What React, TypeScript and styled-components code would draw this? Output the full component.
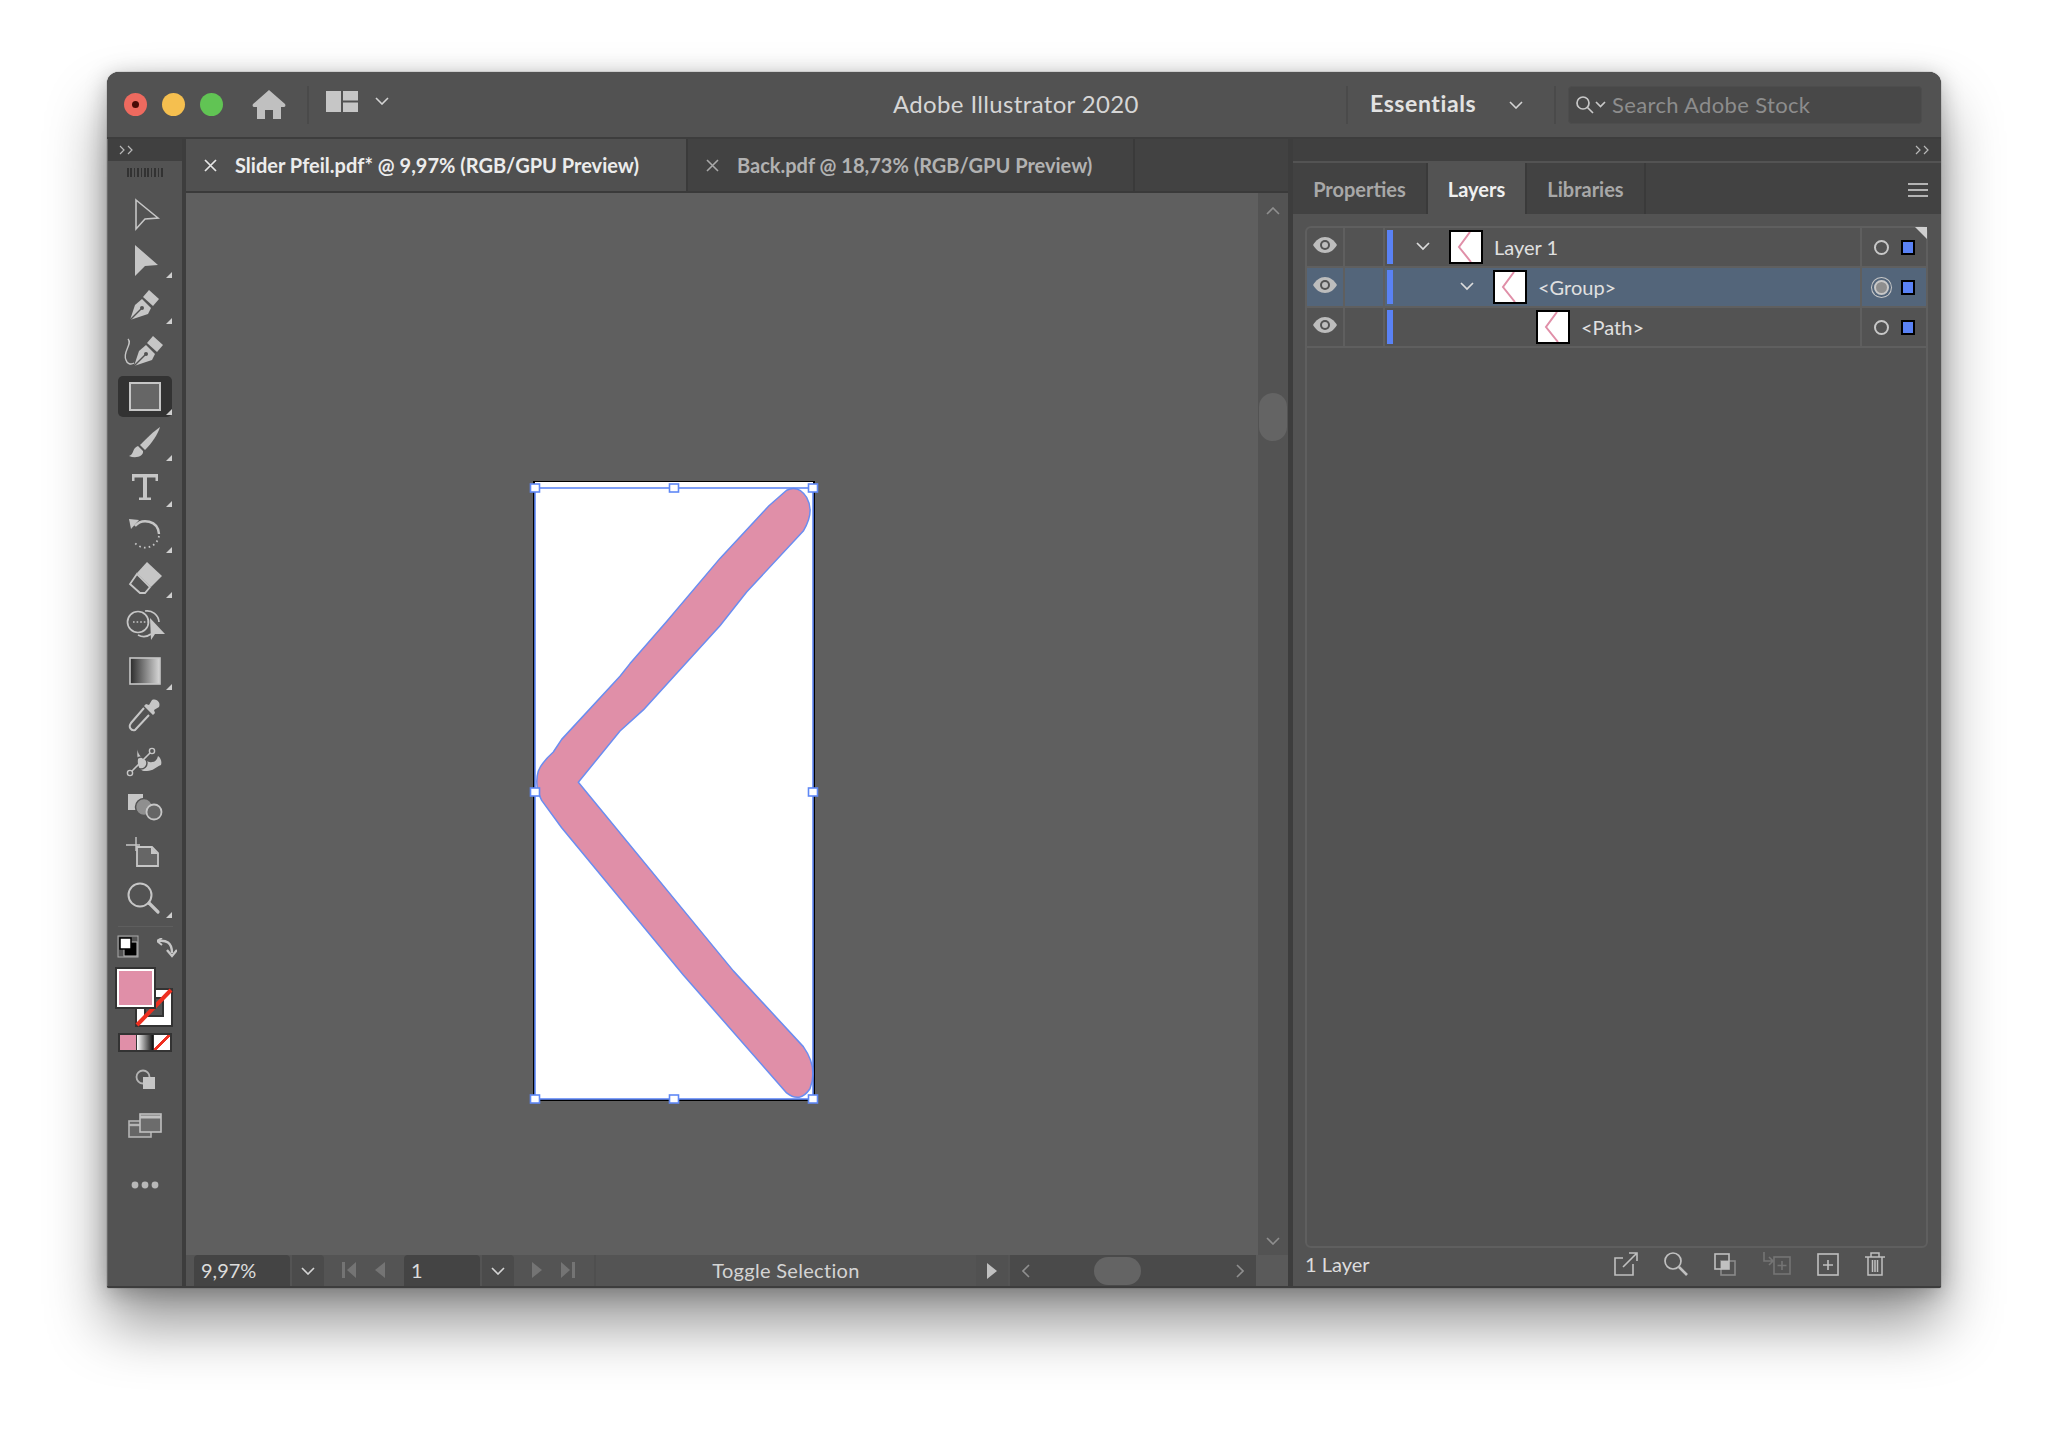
import React from "react";
import styled, { createGlobalStyle } from "styled-components";

const GlobalStyle = createGlobalStyle`
  html, body { margin: 0; padding: 0; background: #fff; }
  body { width: 2048px; height: 1429px; overflow: hidden; font-family: "Lato", "Noto Sans", sans-serif; }
  * { box-sizing: border-box; }
`;

const ICON = "#c6c6c6";
const PINK = "#e08fa8";
const BLUE = "#5a82f5";

const Win = styled.div`
  width: 1834px;
  height: 1216px;
  margin: 72px 0 0 107px;
  border-radius: 12px 12px 2px 2px;
  background: #3d3d3d;
  overflow: hidden;
  display: flex;
  flex-direction: column;
  box-shadow: 0 36px 60px rgba(0, 0, 0, 0.42), 0 4px 22px rgba(0, 0, 0, 0.25), 0 0 1px #333;
`;
const TitleBar = styled.div`
  height: 65px;
  flex: none;
  background: #525252;
  display: flex;
  align-items: center;
  padding-left: 17px;
  position: relative;
  margin-bottom: 2px;
`;
const Light = styled.span<{ $c: string }>`
  width: 23px;
  height: 23px;
  border-radius: 50%;
  background: ${(p) => p.$c};
  margin-right: 15px;
  flex: none;
  display: flex;
  align-items: center;
  justify-content: center;
`;
const LightDot = styled.span`
  width: 7px;
  height: 7px;
  border-radius: 50%;
  background: #4a0b06;
`;
const Sep = styled.span<{ $ml: number }>`
  width: 2px;
  height: 38px;
  background: #4a4a4a;
  margin-left: ${(p) => p.$ml}px;
  flex: none;
`;
const AppTitle = styled.div`
  position: absolute;
  left: 786px;
  top: 17px;
  font-size: 24px;
  line-height: 30px;
  color: #d6d6d6;
  letter-spacing: 0.35px;
`;
const Workspace = styled.div`
  margin-left: 22px;
  font-size: 23px;
  font-weight: 700;
  color: #e2e2e2;
  letter-spacing: 0.6px;
  width: 119px;
  position: relative;
  top: -2px;
`;
const SearchBox = styled.div`
  width: 354px;
  height: 38px;
  margin-left: 12px;
  background: #484848;
  border: 1px solid #4d4d4d;
  border-radius: 4px;
  display: flex;
  align-items: center;
  padding-left: 6px;
  color: #8d8d8d;
  font-size: 22px;
  letter-spacing: 0.35px;
`;
const Body = styled.div`
  flex: 1;
  display: flex;
  min-height: 0;
  padding-bottom: 2px;
`;
const Toolbar = styled.div`
  width: 75px;
  flex: none;
  margin-right: 4px;
  background: #535353;
  display: flex;
  flex-direction: column;
  align-items: center;
  border-left: 1px solid #6a6a6a;
`;
const CollapseStrip = styled.div<{ $right?: boolean }>`
  height: 22px;
  width: 100%;
  flex: none;
  background: #404040;
  display: flex;
  align-items: center;
  justify-content: ${(p) => (p.$right ? "flex-end" : "flex-start")};
  padding: 0 11px;
  margin-bottom: 2px;
`;
const Grip = styled.div`
  width: 36px;
  height: 9px;
  margin: 5px 0 14px;
  flex: none;
  background: repeating-linear-gradient(90deg, #323232 0 1.6px, transparent 1.6px 3.4px);
`;
const Tool = styled.div<{ $active?: boolean }>`
  width: 54px;
  height: 45.7px;
  flex: none;
  position: relative;
  display: flex;
  align-items: center;
  justify-content: center;
  border-radius: 5px;
  &::before {
    content: "";
    position: absolute;
    inset: 2px 0;
    border-radius: 5px;
    background: ${(p) => (p.$active ? "#333" : "transparent")};
  }
  svg { position: relative; }
`;
const MenuMark = styled.span`
  position: absolute;
  right: 0;
  bottom: 4px;
  width: 0;
  height: 0;
  border-style: solid;
  border-width: 0 0 6px 6px;
  border-color: transparent transparent #cfcfcf transparent;
`;
const ToolRule = styled.div`
  width: 55px;
  height: 1px;
  background: #5e5e5e;
  margin-top: 4px;
  flex: none;
`;
const ColorStack = styled.div`
  position: relative;
  width: 56px;
  height: 97px;
  margin-top: 8px;
  flex: none;
`;
const FillSwatch = styled.div`
  position: absolute;
  left: 0;
  top: 34px;
  width: 37px;
  height: 38px;
  background: ${PINK};
  border: 2px solid #fff;
  outline: 2px solid #333;
  outline-offset: 0;
`;
const StrokeSwatch = styled.svg`
  position: absolute;
  left: 18px;
  top: 53px;
`;
const SmallSvg = styled.svg<{ $l: number; $t: number }>`
  position: absolute;
  left: ${(p) => p.$l}px;
  top: ${(p) => p.$t}px;
`;
const ModeRow = styled.div`
  display: flex;
  width: 54px;
  height: 19px;
  flex: none;
  margin-top: 1px;
  border: 2px solid #333;
  background: #333;
  gap: 1px;
`;
const ModeCell = styled.div<{ $bg: string }>`
  flex: 1;
  background: ${(p) => p.$bg};
`;
const ToolFoot = styled.div<{ $mt: number }>`
  margin-top: ${(p) => p.$mt}px;
  flex: none;
  line-height: 0;
`;
const Doc = styled.div`
  width: 1102px;
  flex: none;
  margin-right: 5px;
  display: flex;
  flex-direction: column;
`;
const Tabs = styled.div`
  height: 54px;
  flex: none;
  display: flex;
  background: #424242;
  border-bottom: 2px solid #3a3a3a;
`;
const DocTab = styled.div<{ $active?: boolean; $w: number }>`
  width: ${(p) => p.$w}px;
  display: flex;
  align-items: center;
  padding-left: 18px;
  background: ${(p) => (p.$active ? "#505050" : "#424242")};
  border-right: 2px solid #3a3a3a;
  color: ${(p) => (p.$active ? "#ececec" : "#b2b2b2")};
  font-size: 20px;
  font-weight: 700;
  white-space: nowrap;
`;
const TabClose = styled.svg`
  margin-right: 18px;
  flex: none;
`;
const Middle = styled.div`
  flex: 1;
  display: flex;
  min-height: 0;
`;
const Canvas = styled.div`
  flex: 1;
  background: #5f5f5f;
  padding: 288px 0 0 347px;
`;
const Artboard = styled.div`
  position: relative;
  width: 282px;
  height: 620px;
  background: #fff;
  border: 2px solid #000;
  border-top-width: 1px;
`;
const ArtOverlay = styled.svg`
  position: absolute;
  left: -15px;
  top: -12px;
`;
const VScroll = styled.div`
  width: 30px;
  flex: none;
  background: #535353;
  display: flex;
  flex-direction: column;
  align-items: center;
  padding: 14px 0 10px;
  justify-content: space-between;
`;
const VThumb = styled.div`
  width: 28px;
  height: 48px;
  border-radius: 14px;
  background: #646464;
  margin-bottom: 9px;
`;
const StatusBar = styled.div`
  height: 31px;
  flex: none;
  display: flex;
  background: #545454;
  padding-left: 8px;
  color: #dcdcdc;
  font-size: 20px;
`;
const Field = styled.div<{ $w: number }>`
  width: ${(p) => p.$w}px;
  background: #444;
  border-radius: 4px 4px 0 0;
  padding: 3px 0 0 7px;
  flex: none;
`;
const DropBtn = styled.div`
  width: 32px;
  margin-left: 2px;
  background: #4b4b4b;
  border-radius: 0 4px 0 0;
  display: flex;
  align-items: center;
  justify-content: center;
  flex: none;
`;
const NavGroup = styled.div<{ $w: number }>`
  width: ${(p) => p.$w}px;
  flex: none;
  display: flex;
  align-items: center;
  padding: 0 0 2px 18px;
  gap: 19px;
`;
const ToggleLabel = styled.div`
  width: 382px;
  flex: none;
  border-left: 2px solid #4f4f4f;
  text-align: center;
  padding: 3px 0 0 0;
  letter-spacing: 0.3px;
  color: #d4d4d4;
`;
const PlayCell = styled.div`
  width: 32px;
  flex: none;
  background: #515151;
  display: flex;
  align-items: center;
  justify-content: center;
`;
const HScroll = styled.div`
  width: 246px;
  flex: none;
  margin-left: 2px;
  background: #4a4a4a;
  display: flex;
  align-items: center;
  justify-content: space-between;
  padding: 0 12px;
`;
const HThumb = styled.div`
  width: 47px;
  height: 28px;
  border-radius: 14px;
  background: #646464;
`;
const Corner = styled.div`
  flex: 1;
  background: #5a5a5a;
`;
const Panel = styled.div`
  flex: 1;
  min-width: 0;
  background: #535353;
  display: flex;
  flex-direction: column;
  padding-bottom: 2px;
`;
const PanelTabs = styled.div`
  height: 51px;
  flex: none;
  display: flex;
  align-items: stretch;
  background: #424242;
  position: relative;
`;
const PanelTab = styled.div<{ $active?: boolean; $w: number }>`
  width: ${(p) => p.$w}px;
  display: flex;
  align-items: center;
  justify-content: center;
  font-size: 20px;
  font-weight: 700;
  color: ${(p) => (p.$active ? "#f0f0f0" : "#a8a8a8")};
  background: ${(p) => (p.$active ? "#535353" : "#424242")};
  border-right: 2px solid #3a3a3a;
`;
const PanelMenu = styled.svg`
  position: absolute;
  right: 13px;
  top: 20px;
`;
const List = styled.div`
  flex: 1;
  margin: 12px 13px 0 12px;
  border: 2px solid #5f5f5f;
  border-radius: 6px;
  position: relative;
  min-height: 0;
`;
const Corner2 = styled.span`
  position: absolute;
  right: -1px;
  top: -1px;
  width: 0;
  height: 0;
  border-style: solid;
  border-width: 0 12px 12px 0;
  border-color: transparent #d0d0d0 transparent transparent;
`;
const Row = styled.div<{ $selected?: boolean }>`
  height: 40px;
  display: flex;
  align-items: center;
  border-bottom: 2px solid #5f5f5f;
  background: ${(p) => (p.$selected ? "#53657a" : "transparent")};
  color: #e0e0e0;
  font-size: 20px;
`;
const EyeCell = styled.div`
  width: 38px;
  height: 100%;
  flex: none;
  border-right: 2px solid #5f5f5f;
  display: flex;
  align-items: center;
  justify-content: center;
  padding-bottom: 4px;
`;
const LockCell = styled.div`
  width: 40px;
  height: 100%;
  flex: none;
  border-right: 2px solid #5f5f5f;
`;
const ColorBar = styled.div`
  width: 6px;
  height: 34px;
  background: ${BLUE};
  margin-left: 2px;
  flex: none;
`;
const Tree = styled.div<{ $indent: number }>`
  flex: 1;
  display: flex;
  align-items: center;
  padding-left: ${(p) => p.$indent}px;
  min-width: 0;
`;
const Disclose = styled.svg`
  width: 16px;
  height: 10px;
  margin-right: 18px;
  flex: none;
`;
const Thumb = styled.div`
  width: 34px;
  height: 34px;
  background: #fff;
  border: 2px solid #000;
  margin-right: 11px;
  flex: none;
  line-height: 0;
`;
const TargetCell = styled.div`
  width: 66px;
  height: 100%;
  flex: none;
  border-left: 2px solid #5f5f5f;
  display: flex;
  align-items: center;
  padding-left: 12px;
`;
const Target = styled.span<{ $on?: boolean }>`
  width: 15px;
  height: 15px;
  border-radius: 50%;
  flex: none;
  margin-right: 12px;
  border: 2px solid #c8c8c8;
  background: ${(p) => (p.$on ? "#8e8e8e" : "transparent")};
  box-shadow: ${(p) => (p.$on ? "0 0 0 2px #53657a, 0 0 0 3px #c8c8c8" : "none")};
`;
const SelectBox = styled.span`
  width: 14px;
  height: 15px;
  background: ${BLUE};
  border: 2px solid #000;
  flex: none;
`;
const PanelFoot = styled.div`
  height: 36px;
  flex: none;
  display: flex;
  align-items: center;
  padding: 0 56px 4px 12px;
  color: #dcdcdc;
  font-size: 20px;
`;
const FootIcons = styled.div`
  margin-left: auto;
  display: flex;
  align-items: center;
  gap: 26px;
`;

const Chevron = ({ c = "#d4d4d4", dir = "down" }: { c?: string; dir?: "down" | "up" | "left" | "right" }) => {
  const d = { down: "M1 1l6 6 6-6", up: "M1 7l6-6 6 6", left: "M7 1L1 7l6 6", right: "M1 1l6 6-6 6" }[dir];
  const w = dir === "up" || dir === "down";
  return (
    <svg width={w ? 14 : 8} height={w ? 8 : 14} viewBox={w ? "0 0 14 8" : "0 0 8 14"} fill="none" stroke={c} strokeWidth="1.6">
      <path d={d} />
    </svg>
  );
};

const Pen = () => (
  <g>
    <path d="M31 8l10 9-6 7-10-9z" />
    <path d="M24 17l9 9-3 6-18 6 5-15z" />
    <path d="M12 38l11-11" stroke="#535353" strokeWidth="1.4" />
    <circle cx="24" cy="26" r="2" fill="#535353" />
  </g>
);

const draw = (children: React.ReactNode) => (
  <svg width="54" height="46" viewBox="0 0 54 46" fill={ICON}>
    {children}
  </svg>
);

const TOOLS: { art: React.ReactNode; menu?: boolean; active?: boolean }[] = [
  { art: draw(<path d="M18 9l22 18-13 1-9 10z" fill="none" stroke={ICON} strokeWidth="1.6" />) },
  { art: draw(<path d="M17 8l23 20-13 1-10 10z" />), menu: true },
  { art: draw(<Pen />), menu: true },
  {
    art: draw(
      <g>
        <g transform="translate(4 0)"><Pen /></g>
        <path d="M10 11c5 5-6 13-2 21 1 4 5 5 8 3" fill="none" stroke={ICON} strokeWidth="1.4" />
      </g>
    ),
  },
  { art: draw(<rect x="12" y="9" width="30" height="27" fill="#666" stroke={ICON} strokeWidth="2" />), menu: true, active: true },
  {
    art: draw(
      <g>
        <path d="M42 8c-6 4-14 12-20 18l5 5c7-7 13-16 15-23z" />
        <path d="M20 27c-6 2-4 9-9 10 7 3 15 0 14-5z" />
      </g>
    ),
    menu: true,
  },
  { art: draw(<path d="M14 9h26v7h-2.5v-3.5H29v20h4V35H21v-2.5h4v-20h-8.5V16H14z" />), menu: true },
  {
    art: draw(
      <g fill="none" stroke={ICON}>
        <path d="M17 15c7-8 23-6 24 8" strokeWidth="2.4" />
        <path d="M41 25a14 14 0 0 1-25 6" strokeWidth="1.8" strokeDasharray="1.6 3.2" />
        <path d="M11 8l10 1-8 9z" fill={ICON} stroke="none" />
      </g>
    ),
    menu: true,
  },
  {
    art: draw(
      <g>
        <path d="M29 6l15 14-11 11-14-14z" />
        <path d="M19 18l13 13-5 6h-5l-10-9z" fill="none" stroke={ICON} strokeWidth="1.8" />
      </g>
    ),
    menu: true,
  },
  {
    art: draw(
      <g>
        <circle cx="20" cy="20" r="10.5" fill="none" stroke={ICON} strokeWidth="1.7" />
        <path d="M27 9a12 12 0 0 1 14 11M33 32a12 12 0 0 1-13 1" fill="none" stroke={ICON} strokeWidth="1.7" />
        <path d="M15 20h17" stroke={ICON} strokeWidth="1.6" strokeDasharray="1.6 2" />
        <path d="M32 16l15 16H37l-4 6z" />
      </g>
    ),
  },
  {
    art: (
      <svg width="54" height="46" viewBox="0 0 54 46">
        <defs>
          <linearGradient id="grad" x1="0" x2="1" y1="0" y2="0">
            <stop offset="0" stopColor="#2a2a2a" />
            <stop offset="1" stopColor="#d8d8d8" />
          </linearGradient>
        </defs>
        <rect x="12" y="10" width="30" height="26" fill="url(#grad)" stroke={ICON} strokeWidth="1.6" />
      </svg>
    ),
    menu: true,
  },
  {
    art: draw(
      <g>
        <path d="M34 7c5-2 9 3 7 7l-5 3 1 3-2 2-9-9 2-2 3 1z" />
        <path d="M26 15l-13 15c-3 4 0 8 4 7l14-15" fill="none" stroke={ICON} strokeWidth="2" />
      </g>
    ),
  },
  {
    art: draw(
      <g>
        <path d="M20 10c-1 5 3 7 5 10 4 1 5 4 9 3 3 0 5-2 6-6 3 2 4 6 3 9-5 2-8 6-14 6-7 1-10-5-9-12-1-3-1-7 0-10z" />
        <circle cx="23" cy="24" r="6" fill="none" stroke="#535353" strokeWidth="1.5" />
        <path d="M12 34l22-22" stroke={ICON} strokeWidth="1.6" />
        <circle cx="12" cy="34" r="2.6" fill="#535353" stroke={ICON} strokeWidth="1.4" />
        <circle cx="34" cy="12" r="2.6" fill="#535353" stroke={ICON} strokeWidth="1.4" />
      </g>
    ),
  },
  {
    art: draw(
      <g>
        <rect x="10" y="9" width="15" height="16" />
        <circle cx="26" cy="22" r="8.5" fill="#8f8f8f" stroke="#535353" strokeWidth="1.5" />
        <circle cx="36" cy="27" r="7.5" fill="#666" stroke={ICON} strokeWidth="1.8" />
      </g>
    ),
  },
  {
    art: draw(
      <g>
        <path d="M18 7v14M8 15h14" stroke={ICON} strokeWidth="1.4" fill="none" />
        <path d="M19 17h15l6 6v13H19z" fill="#666" stroke={ICON} strokeWidth="1.8" />
        <path d="M33 17v7h7z" fill={ICON} />
      </g>
    ),
  },
  {
    art: draw(
      <g fill="none" stroke={ICON}>
        <circle cx="22" cy="19" r="11.5" strokeWidth="2" />
        <path d="M31 27l9 9" strokeWidth="3.2" strokeLinecap="round" />
      </g>
    ),
    menu: true,
  },
];

const ThumbArt = () => (
  <svg width="30" height="30" viewBox="0 0 30 30" fill="none" stroke={PINK} strokeWidth="2">
    <path d="M19 0L8 15l12 15" />
  </svg>
);

const Eye = () => (
  <svg width="24" height="16" viewBox="0 0 24 16">
    <path d="M0 8c3-5 7-8 12-8s9 3 12 8c-3 5-7 8-12 8S3 13 0 8z" fill="#bdbdbd" />
    <circle cx="12" cy="8" r="5" fill="#535353" />
    <circle cx="12" cy="8" r="3" fill="#bdbdbd" />
  </svg>
);

const LAYERS = [
  { name: "Layer 1", indent: 22, open: true },
  { name: "<Group>", indent: 66, open: true, selected: true },
  { name: "<Path>", indent: 143, open: false },
];

export default function App() {
  return (
    <>
      <GlobalStyle />
      <Win>
        <TitleBar>
          <Light $c="#ee6a5f"><LightDot /></Light>
          <Light $c="#f5bf4f" />
          <Light $c="#61c454" />
          <svg width="34" height="29" viewBox="0 0 34 29" fill="#c0c0c0" style={{ marginLeft: 14 }}>
            <path d="M17 0l16 14c1 2 0 3-2 3h-2v12h-8v-9h-8v9H5V17H3c-2 0-3-1-2-3z" />
          </svg>
          <Sep $ml={21} />
          <svg width="32" height="21" viewBox="0 0 32 21" fill="#c6c6c6" style={{ marginLeft: 17, marginBottom: 7 }}>
            <rect width="15" height="21" />
            <rect x="17" width="15" height="9.5" />
            <rect x="17" y="11.5" width="15" height="9.5" />
          </svg>
          <span style={{ marginLeft: 17, marginBottom: 8, lineHeight: 0 }}><Chevron /></span>
          <AppTitle>Adobe Illustrator 2020</AppTitle>
          <Sep $ml={957} />
          <Workspace>Essentials</Workspace>
          <span style={{ marginLeft: 20, lineHeight: 0 }}><Chevron /></span>
          <Sep $ml={31} />
          <SearchBox>
            <svg width="32" height="20" viewBox="0 0 32 20" fill="none" stroke="#c8c8c8" strokeWidth="1.7" style={{ marginRight: 5 }}>
              <circle cx="8" cy="8" r="6" />
              <path d="M12.5 12.5l5.5 5.5M21 7l4.5 4.5L30 7" />
            </svg>
            Search Adobe Stock
          </SearchBox>
        </TitleBar>
        <Body>
          <Toolbar>
            <CollapseStrip>
              <svg width="15" height="10" viewBox="0 0 15 10" fill="none" stroke="#b8b8b8" strokeWidth="1.2"><path d="M1 1l4 4-4 4M9 1l4 4-4 4" /></svg>
            </CollapseStrip>
            <Grip />
            {TOOLS.map((t, i) => (
              <Tool key={i} $active={t.active}>
                {t.art}
                {t.menu && <MenuMark />}
              </Tool>
            ))}
            <ToolRule />
            <ColorStack>
              <SmallSvg $l={0} $t={0} width="22" height="23" viewBox="0 0 22 23">
                <rect x="1" y="1" width="20" height="21" fill="none" stroke="#aaa" strokeWidth="1" />
                <rect x="7" y="7" width="13" height="14" fill="#000" stroke="#bbb" />
                <rect x="3" y="3" width="11" height="11" fill="#fff" stroke="#000" strokeWidth="1.5" />
              </SmallSvg>
              <SmallSvg $l={40} $t={3} width="20" height="20" viewBox="0 0 20 20" fill="none" stroke="#c6c6c6" strokeWidth="2.4">
                <path d="M1 3c8-1 14 1 14 12" />
                <path d="M10 12l5 6 5-6" strokeWidth="2.4" />
                <path d="M5 0L0 3l5 4" strokeWidth="2" />
              </SmallSvg>
              <StrokeSwatch width="38" height="39" viewBox="0 0 38 39">
                <rect x="1" y="1" width="36" height="37" fill="#fff" stroke="#333" strokeWidth="2" />
                <rect x="10" y="10" width="18" height="18" fill="#535353" stroke="#333" strokeWidth="2" />
                <path d="M2 37L36 2" stroke="#ee2f20" strokeWidth="4" />
              </StrokeSwatch>
              <FillSwatch />
            </ColorStack>
            <ModeRow>
              <ModeCell $bg={PINK} />
              <ModeCell $bg="linear-gradient(90deg,#fff,#111)" />
              <ModeCell $bg="linear-gradient(135deg,#fff 42%,#ee2f20 42%,#ee2f20 58%,#fff 58%)" />
            </ModeRow>
            <ToolFoot $mt={17}>
              <svg width="20" height="20" viewBox="0 0 20 20">
                <circle cx="8" cy="8" r="6.5" fill="none" stroke="#b4b4b4" strokeWidth="1.8" />
                <rect x="8" y="8" width="12" height="12" fill="#c6c6c6" />
              </svg>
            </ToolFoot>
            <ToolFoot $mt={24}>
              <svg width="34" height="25" viewBox="0 0 34 25">
                <rect x="1" y="8" width="22" height="16" fill="#666" stroke="#b4b4b4" strokeWidth="1.6" />
                <path d="M1 12h22" stroke="#b4b4b4" strokeWidth="2.4" />
                <rect x="12" y="1" width="21" height="18" fill="#6c6c6c" stroke="#c0c0c0" strokeWidth="1.6" />
                <path d="M12 4h21" stroke="#c0c0c0" strokeWidth="3" />
              </svg>
            </ToolFoot>
            <ToolFoot $mt={43}>
              <svg width="28" height="8" viewBox="0 0 28 8" fill="#b8b8b8">
                <circle cx="4" cy="4" r="3.4" />
                <circle cx="14" cy="4" r="3.4" />
                <circle cx="24" cy="4" r="3.4" />
              </svg>
            </ToolFoot>
          </Toolbar>
          <Doc>
            <Tabs>
              <DocTab $active $w={502}>
                <TabClose width="13" height="13" viewBox="0 0 13 13" stroke="#e6e6e6" strokeWidth="1.7"><path d="M1 1l11 11M12 1L1 12" /></TabClose>
                Slider Pfeil.pdf* @ 9,97% (RGB/GPU Preview)
              </DocTab>
              <DocTab $w={447}>
                <TabClose width="13" height="13" viewBox="0 0 13 13" stroke="#a8a8a8" strokeWidth="1.6"><path d="M1 1l11 11M12 1L1 12" /></TabClose>
                Back.pdf @ 18,73% (RGB/GPU Preview)
              </DocTab>
            </Tabs>
            <Middle>
              <Canvas>
                <Artboard>
                  <ArtOverlay width="320" height="660" viewBox="0 0 320 660">
                    <g transform="scale(0.3333 0.4209)">
                      <path
                        d="M800 48L747 85L600 210L440 360L330 460L300 490L125 640L100 670Q65 695 55 715Q42 750 65 785L125 850L490 1200L800 1480Q840 1505 870 1470Q895 1420 850 1370L640 1190L175 742L300 620L370 570L600 370L680 290L850 145Q885 100 860 65Q835 35 800 48Z"
                        fill="#e08fa8"
                        stroke="#6a8df0"
                        strokeWidth="1.5"
                        strokeLinejoin="round"
                        vectorEffect="non-scaling-stroke"
                      />
                    </g>
                    <rect x="15" y="18" width="278" height="611" fill="none" stroke="#5f88f5" strokeWidth="1.6" />
                    {[15, 154, 293].flatMap((x) =>
                      [18, 322, 629]
                        .filter((y) => !(x === 154 && y === 322))
                        .map((y) => (
                          <rect key={`${x}-${y}`} x={x - 4.5} y={y - 4} width="9" height="8" fill="#fff" stroke="#5f88f5" strokeWidth="1.6" />
                        ))
                    )}
                  </ArtOverlay>
                </Artboard>
              </Canvas>
              <VScroll>
                <Chevron c="#8f8f8f" dir="up" />
                <VThumb />
                <span style={{ height: 430 }} />
                <Chevron c="#8f8f8f" />
              </VScroll>
            </Middle>
            <StatusBar>
              <Field $w={96}>9,97%</Field>
              <DropBtn><Chevron /></DropBtn>
              <NavGroup $w={80}>
                <svg width="14" height="18" viewBox="0 0 14 18" fill="#747474"><path d="M0 1h3v16H0zM14 1v16L5 9z" /></svg>
                <svg width="10" height="18" viewBox="0 0 10 18" fill="#747474"><path d="M10 1v16L0 9z" /></svg>
              </NavGroup>
              <Field $w={76}>1</Field>
              <DropBtn><Chevron /></DropBtn>
              <NavGroup $w={80}>
                <svg width="10" height="18" viewBox="0 0 10 18" fill="#747474"><path d="M0 1v16l10-8z" /></svg>
                <svg width="14" height="18" viewBox="0 0 14 18" fill="#747474"><path d="M0 1v16l9-8zM11 1h3v16h-3z" /></svg>
              </NavGroup>
              <ToggleLabel>Toggle Selection</ToggleLabel>
              <PlayCell>
                <svg width="10" height="16" viewBox="0 0 10 16" fill="#c0c0c0"><path d="M0 0l10 8-10 8z" /></svg>
              </PlayCell>
              <HScroll>
                <Chevron c="#8f8f8f" dir="left" />
                <HThumb style={{ marginLeft: 34 }} />
                <span style={{ width: 34 }} />
                <Chevron c="#8f8f8f" dir="right" />
              </HScroll>
              <Corner />
            </StatusBar>
          </Doc>
          <Panel>
            <CollapseStrip $right>
              <svg width="15" height="10" viewBox="0 0 15 10" fill="none" stroke="#b8b8b8" strokeWidth="1.2"><path d="M1 1l4 4-4 4M9 1l4 4-4 4" /></svg>
            </CollapseStrip>
            <PanelTabs>
              <PanelTab $w={135}>Properties</PanelTab>
              <PanelTab $active $w={99}>Layers</PanelTab>
              <PanelTab $w={119}>Libraries</PanelTab>
              <PanelMenu width="20" height="14" viewBox="0 0 20 14" stroke="#b4b4b4" strokeWidth="1.8"><path d="M0 1h20M0 7h20M0 13h20" /></PanelMenu>
            </PanelTabs>
            <List>
              <Corner2 />
              {LAYERS.map((l) => (
                <Row key={l.name} $selected={l.selected}>
                  <EyeCell><Eye /></EyeCell>
                  <LockCell />
                  <ColorBar />
                  <Tree $indent={l.indent}>
                    {l.open && (
                      <Disclose viewBox="0 0 16 10" fill="none" stroke="#dcdcdc" strokeWidth="1.7"><path d="M2 1l6 6 6-6" /></Disclose>
                    )}
                    <Thumb><ThumbArt /></Thumb>
                    {l.name}
                  </Tree>
                  <TargetCell>
                    <Target $on={l.selected} />
                    <SelectBox />
                  </TargetCell>
                </Row>
              ))}
            </List>
            <PanelFoot>
              1 Layer
              <FootIcons>
                <svg width="24" height="24" viewBox="0 0 24 24" fill="none" stroke="#c0c0c0" strokeWidth="1.6">
                  <path d="M9 6H1v17h18v-11M9 15L22 2M15 1h8v8" />
                </svg>
                <svg width="24" height="24" viewBox="0 0 24 24" fill="none" stroke="#c0c0c0" strokeWidth="1.7">
                  <circle cx="9" cy="9" r="8" />
                  <path d="M15 15l8 8" strokeWidth="2.6" />
                </svg>
                <svg width="22" height="24" viewBox="0 0 22 24" fill="none">
                  <rect x="7" y="9" width="14" height="14" stroke="#8a8a8a" strokeWidth="1.6" />
                  <rect x="1" y="2" width="14" height="15" stroke="#c0c0c0" strokeWidth="1.6" />
                  <rect x="7" y="9" width="8" height="8" fill="#c0c0c0" />
                </svg>
                <svg width="29" height="24" viewBox="0 0 29 24" fill="none" stroke="#757575" strokeWidth="1.6">
                  <path d="M2 0v9h8M7 5l4 4-4 4" />
                  <rect x="12" y="5" width="16" height="17" />
                  <path d="M20 9v9M15.5 13.500h9" />
                </svg>
                <svg width="22" height="24" viewBox="0 0 22 24" fill="none" stroke="#c0c0c0" strokeWidth="1.6">
                  <rect x="1" y="2" width="20" height="21" />
                  <path d="M11 8v10M6 13h10" />
                </svg>
                <svg width="20" height="24" viewBox="0 0 20 24" fill="none" stroke="#c0c0c0" strokeWidth="1.5">
                  <path d="M0 5h20M6 5V1h8v4M3 5v18h14V5M7.500 8v12M10 8v12M12.500 8v12" />
                </svg>
              </FootIcons>
            </PanelFoot>
          </Panel>
        </Body>
      </Win>
    </>
  );
}
